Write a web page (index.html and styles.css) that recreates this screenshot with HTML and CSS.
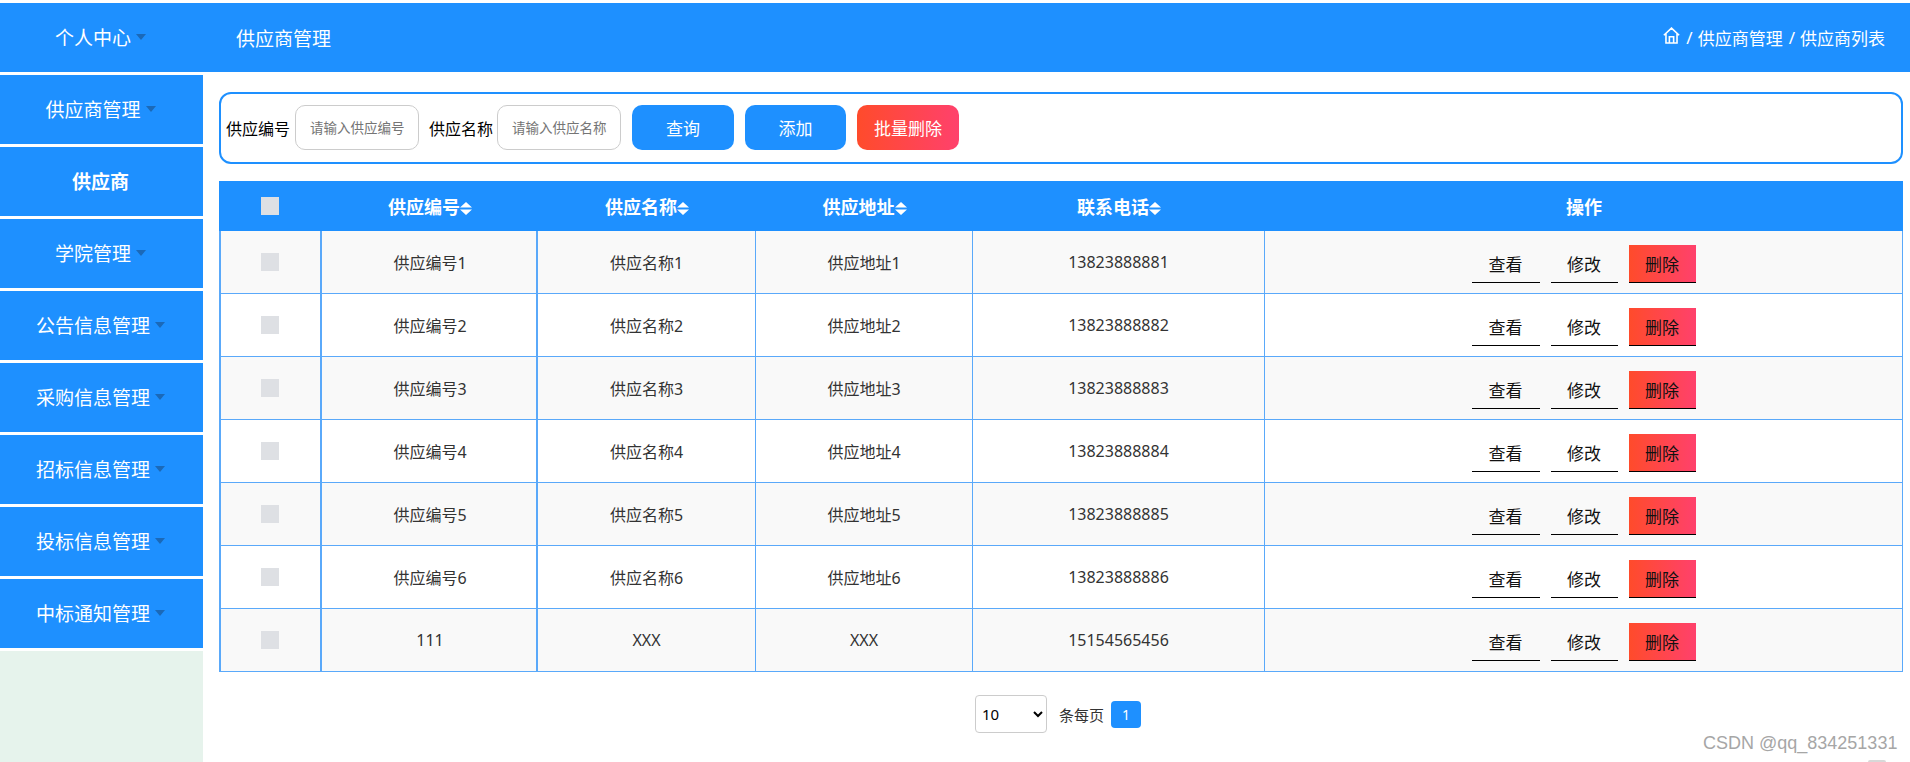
FILE: index.html
```html
<!DOCTYPE html>
<html lang="zh-CN">
<head>
<meta charset="utf-8">
<title>供应商管理</title>
<link rel="stylesheet" href="styles.css">
</head>
<body>
<div class="app">
  <aside class="sidebar">
    <div class="side-item">个人中心<i class="caret"></i></div>
    <div class="side-item">供应商管理<i class="caret"></i></div>
    <div class="side-item side-active">供应商</div>
    <div class="side-item">学院管理<i class="caret"></i></div>
    <div class="side-item">公告信息管理<i class="caret"></i></div>
    <div class="side-item">采购信息管理<i class="caret"></i></div>
    <div class="side-item">招标信息管理<i class="caret"></i></div>
    <div class="side-item">投标信息管理<i class="caret"></i></div>
    <div class="side-item">中标通知管理<i class="caret"></i></div>
    <div class="side-fill"></div>
  </aside>
  <main class="main">
    <header class="topbar">
      <span class="page-title">供应商管理</span>
      <nav class="crumbs">
        <svg class="home" viewBox="0 0 16 16" width="17" height="17" aria-hidden="true"><path d="M.8 7.8 8 1l7.2 6.8M2.8 6.2v8.9h10.4V6.2M6 15.1V9.2h4v5.9" fill="none" stroke="#fff" stroke-width="1.5"/></svg>
        <span class="sep">/</span><span>供应商管理</span><span class="sep">/</span><span>供应商列表</span>
      </nav>
    </header>
    <section class="content">
      <form class="search">
        <label class="search-label label-first">供应编号</label>
        <input class="search-input" type="text" placeholder="请输入供应编号">
        <label class="search-label label-second">供应名称</label>
        <input class="search-input" type="text" placeholder="请输入供应名称">
        <button class="btn btn-blue btn-first" type="button">查询</button>
        <button class="btn btn-blue" type="button">添加</button>
        <button class="btn btn-red" type="button">批量删除</button>
      </form>
      <table class="grid">
        <colgroup>
          <col class="c-check"><col class="c-code"><col class="c-name"><col class="c-addr"><col class="c-tel"><col class="c-act">
        </colgroup>
        <thead>
          <tr>
            <th class="th-check"><input class="check" type="checkbox"></th>
            <th>供应编号<svg class="sort" viewBox="0 0 12 13" width="12" height="13"><path d="M6 0 12 5.5H0zM6 13 0 7.5h12z" fill="#fff"/></svg></th>
            <th>供应名称<svg class="sort" viewBox="0 0 12 13" width="12" height="13"><path d="M6 0 12 5.5H0zM6 13 0 7.5h12z" fill="#fff"/></svg></th>
            <th>供应地址<svg class="sort" viewBox="0 0 12 13" width="12" height="13"><path d="M6 0 12 5.5H0zM6 13 0 7.5h12z" fill="#fff"/></svg></th>
            <th>联系电话<svg class="sort" viewBox="0 0 12 13" width="12" height="13"><path d="M6 0 12 5.5H0zM6 13 0 7.5h12z" fill="#fff"/></svg></th>
            <th>操作</th>
          </tr>
        </thead>
        <tbody>
          <tr>
            <td><input class="check" type="checkbox"></td><td>供应编号1</td><td>供应名称1</td><td>供应地址1</td><td>13823888881</td>
            <td class="act-cell"><div class="actions"><a class="act">查看</a><a class="act">修改</a><a class="act act-del">删除</a></div></td>
          </tr>
          <tr>
            <td><input class="check" type="checkbox"></td><td>供应编号2</td><td>供应名称2</td><td>供应地址2</td><td>13823888882</td>
            <td class="act-cell"><div class="actions"><a class="act">查看</a><a class="act">修改</a><a class="act act-del">删除</a></div></td>
          </tr>
          <tr>
            <td><input class="check" type="checkbox"></td><td>供应编号3</td><td>供应名称3</td><td>供应地址3</td><td>13823888883</td>
            <td class="act-cell"><div class="actions"><a class="act">查看</a><a class="act">修改</a><a class="act act-del">删除</a></div></td>
          </tr>
          <tr>
            <td><input class="check" type="checkbox"></td><td>供应编号4</td><td>供应名称4</td><td>供应地址4</td><td>13823888884</td>
            <td class="act-cell"><div class="actions"><a class="act">查看</a><a class="act">修改</a><a class="act act-del">删除</a></div></td>
          </tr>
          <tr>
            <td><input class="check" type="checkbox"></td><td>供应编号5</td><td>供应名称5</td><td>供应地址5</td><td>13823888885</td>
            <td class="act-cell"><div class="actions"><a class="act">查看</a><a class="act">修改</a><a class="act act-del">删除</a></div></td>
          </tr>
          <tr>
            <td><input class="check" type="checkbox"></td><td>供应编号6</td><td>供应名称6</td><td>供应地址6</td><td>13823888886</td>
            <td class="act-cell"><div class="actions"><a class="act">查看</a><a class="act">修改</a><a class="act act-del">删除</a></div></td>
          </tr>
          <tr>
            <td><input class="check" type="checkbox"></td><td>111</td><td>XXX</td><td>XXX</td><td>15154565456</td>
            <td class="act-cell"><div class="actions"><a class="act">查看</a><a class="act">修改</a><a class="act act-del">删除</a></div></td>
          </tr>
        </tbody>
      </table>
      <div class="pager">
        <select class="page-size"><option>10</option><option>20</option></select>
        <span class="page-text">条每页</span>
        <span class="page-num">1</span>
      </div>
    </section>
  </main>
</div>
<div class="watermark">CSDN @qq_834251331</div>
<div class="corner-mark"></div>
</body>
</html>
```
FILE: styles.css
```css
* { box-sizing: border-box; }
html, body { margin: 0; height: 762px; overflow: hidden; background: #fff; }
body {
  font-family: "Noto Sans", "Noto Sans CJK SC", sans-serif;
  color: #333;
  font-size: 16px;
}
.app { display: flex; height: 762px; padding-top: 3px; }

.sidebar { width: 203px; flex: none; display: flex; flex-direction: column; gap: 3px; }
.side-item {
  height: 69px; flex: none; padding: 0 2px 1px 0;
  display: flex; align-items: center; justify-content: center;
  background: #1e90ff; color: #fff; font-size: 19px;
}
.side-active { font-weight: 700; }
.caret {
  width: 0; height: 0; margin-left: 5px;
  border-left: 5px solid transparent; border-right: 5px solid transparent;
  border-top: 6px solid #1b69b8;
}
.side-fill { flex: 1; background: #e6f3ec; }

.main { flex: 1; min-width: 0; }
.topbar {
  height: 69px; padding: 0 25px 0 33px;
  display: flex; align-items: center; justify-content: space-between;
  background: #1e90ff; color: #fff;
}
.page-title { font-size: 19px; }
.crumbs { display: flex; align-items: center; font-size: 17px; }
.home { margin-top: -5px; }
.sep { margin: 0 5px 0 6px; }

.content { padding: 20px 7px 0 16px; }
.search {
  height: 72px; padding: 0 5px 1px;
  display: flex; align-items: center;
  border: 2px solid #1e90ff; border-radius: 12px;
}
.search-label { color: #000; margin-right: 4px; white-space: nowrap; }
.label-first { margin-right: 5px; }
.label-second { margin-left: 10px; }
.search-input {
  width: 124px; height: 45px; padding: 0 0 0 14px;
  border: 1px solid #ccc; border-radius: 10px;
  font: inherit; font-size: 13.5px; color: #333; background: #fff;
}
.btn {
  height: 45px; padding: 0; border: 0; border-radius: 10px;
  color: #fff; font: inherit; font-size: 17px; margin-left: 11px;
}
.btn-blue { width: 101px; background: #1e90ff; }
.btn-first { width: 102px; }
.btn-red { width: 102px; background: linear-gradient(90deg, #ff4b2b, #ff416c); }

.grid {
  width: 1684px; margin-top: 17px; table-layout: fixed;
  border-collapse: separate; border-spacing: 0;
}
.c-check { width: 103px; }
.c-code { width: 216px; }
.c-name { width: 218px; }
.c-addr { width: 217px; }
.c-tel { width: 292px; }
.c-act { width: 638px; }
.grid th {
  height: 50px; padding: 0; background: #1e90ff; color: #fff;
  font-size: 18px; font-weight: 700;
}
.grid th.th-check { padding-right: 1px; }
.sort { vertical-align: -1px; }
.grid td {
  height: 63px; padding: 0 0 1px; text-align: center;
  border-right: 1px solid #5aa9fa; border-bottom: 1px solid #5aa9fa;
}
.grid td:first-child { border-left: 2px solid #5aa9fa; border-right-width: 2px; padding-right: 1px; }
.grid td:nth-child(2) { border-right-width: 2px; padding-left: 2px; }
.grid tbody tr:nth-child(odd) td { background: #f9f9f9; }
.check {
  appearance: none; display: block; width: 18px; height: 18px; margin: 0 auto;
  background: #dee0e4; border: 0; border-radius: 0;
}
.grid td.act-cell { padding: 5px 0 1px; }
.actions { display: flex; justify-content: center; gap: 11px; }
.act {
  width: 67px; height: 38px; display: flex; align-items: center; justify-content: center;
  border-bottom: 1px solid #000; color: #111; font-size: 17px;
}
.act:first-child { width: 68px; }
.act-del { background: linear-gradient(90deg, #ff4b2b, #ff416c); }

.pager {
  margin-top: 23px; padding-left: 756px;
  display: flex; align-items: center;
}
.page-size {
  width: 72px; height: 38px; padding: 0 2px;
  border: 1px solid #ccc; border-radius: 4px; background: #fff;
  color: #000; font: inherit; font-size: 15px;
}
.page-text { margin-left: 12px; font-size: 15px; }
.page-num {
  width: 30px; height: 27px; margin-left: 7px;
  display: flex; align-items: center; justify-content: center;
  background: #1e90ff; color: #fff; border-radius: 4px; font-size: 14px;
}

.watermark {
  position: absolute; left: 1703px; top: 733px;
  font-family: "Liberation Sans", sans-serif; font-size: 18px; line-height: 21px;
  color: #a6a6a6; white-space: nowrap;
}
.corner-mark {
  position: absolute; left: 1868px; top: 760px; width: 18px; height: 2px;
  background: #d8d8d8; border-radius: 9px 9px 0 0;
}
```
